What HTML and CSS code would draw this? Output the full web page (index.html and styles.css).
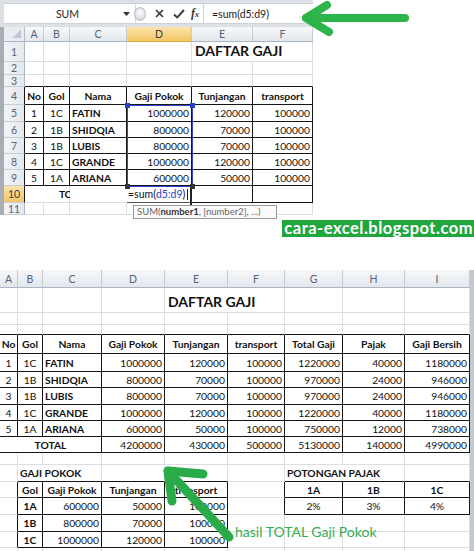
FILE: index.html
```html
<!DOCTYPE html>
<html>
<head>
<meta charset="utf-8">
<link rel="stylesheet" href="styles.css">
</head>
<body>
<div class="sheet1">
  <div class="fbar">
    <div class="namebox"><span class="nbtxt">SUM</span><svg class="dd" width="7" height="4" viewBox="0 0 7 4"><path d="M0 0h7L3.5 4z" fill="#333"/></svg></div>
    <div class="fbtns">
      <span class="circ"></span>
      <svg class="ix" width="9" height="9" viewBox="0 0 9 9"><path d="M1 1l7 7M8 1L1 8" stroke="#3a3a3a" stroke-width="1.7" fill="none"/></svg>
      <svg class="iv" width="12" height="10" viewBox="0 0 12 10"><path d="M1 5.5l3.2 3L11 1" stroke="#3a3a3a" stroke-width="1.9" fill="none"/></svg>
      <span class="fx">f<span class="fxs">x</span></span>
    </div>
    <div class="finput">=sum(d5:d9)</div>
  </div>
  <div class="g1">
    <div class="corner"></div><div class="ch">A</div><div class="ch">B</div><div class="ch">C</div><div class="ch sel">D</div><div class="ch">E</div><div class="ch">F</div>

    <div class="rh">1</div><div class="c"></div><div class="c"></div><div class="c"></div><div class="c"></div><div class="c sp2 t">DAFTAR GAJI</div>
    <div class="rh">2</div><div class="c"></div><div class="c"></div><div class="c"></div><div class="c"></div><div class="c"></div><div class="c"></div>
    <div class="rh">3</div><div class="c kb"></div><div class="c kb"></div><div class="c kb"></div><div class="c kb"></div><div class="c kb"></div><div class="c kb"></div>
    <div class="rh kr">4</div><div class="c k m b">No</div><div class="c k m b">Gol</div><div class="c k m b">Nama</div><div class="c k m b">Gaji Pokok</div><div class="c k m b">Tunjangan</div><div class="c k m b">transport</div>
    <div class="rh kr">5</div><div class="c k m">1</div><div class="c k m">1C</div><div class="c k b">FATIN</div><div class="c k r">1000000</div><div class="c k r">120000</div><div class="c k r">100000</div>
    <div class="rh kr">6</div><div class="c k m">2</div><div class="c k m">1B</div><div class="c k b">SHIDQIA</div><div class="c k r">800000</div><div class="c k r">70000</div><div class="c k r">100000</div>
    <div class="rh kr">7</div><div class="c k m">3</div><div class="c k m">1B</div><div class="c k b">LUBIS</div><div class="c k r">800000</div><div class="c k r">70000</div><div class="c k r">100000</div>
    <div class="rh kr">8</div><div class="c k m">4</div><div class="c k m">1C</div><div class="c k b">GRANDE</div><div class="c k r">1000000</div><div class="c k r">120000</div><div class="c k r">100000</div>
    <div class="rh kr">9</div><div class="c k m">5</div><div class="c k m">1A</div><div class="c k b">ARIANA</div><div class="c k r">600000</div><div class="c k r">50000</div><div class="c k r">100000</div>
    <div class="rh sel kr">10</div><div class="c sp2 tot b">TC</div><div class="c blank"></div><div class="c edit">=sum(<span class="ref">d5:d9</span>)<span class="caret"></span></div><div class="c k"></div><div class="c k"></div>
    <div class="rh">11</div><div class="c"></div><div class="c"></div><div class="c"></div><div class="c edit2"></div><div class="c"></div><div class="c"></div>
  </div>
  <div class="selbox"><i class="hd h1"></i><i class="hd h2"></i><i class="hd h3"></i><i class="hd h4"></i></div>
  <div class="tip">SUM(<b>number1</b>, [number2], ...)</div>
</div>

<div class="brand"><span>cara-excel.blogspot.com</span></div>

<div class="sheet2">
  <div class="g2">
    <div class="ch">A</div><div class="ch">B</div><div class="ch">C</div><div class="ch">D</div><div class="ch">E</div><div class="ch">F</div><div class="ch">G</div><div class="ch">H</div><div class="ch">I</div>

    <div class="c"></div><div class="c"></div><div class="c"></div><div class="c"></div><div class="c sp2 t">DAFTAR GAJI</div><div class="c"></div><div class="c"></div><div class="c"></div>
    <div class="c"></div><div class="c"></div><div class="c"></div><div class="c"></div><div class="c"></div><div class="c"></div><div class="c"></div><div class="c"></div><div class="c"></div>
    <div class="c kb"></div><div class="c kb"></div><div class="c kb"></div><div class="c kb"></div><div class="c kb"></div><div class="c kb"></div><div class="c kb"></div><div class="c kb"></div><div class="c kb"></div>

    <div class="c k m b">No</div><div class="c k m b">Gol</div><div class="c k m b">Nama</div><div class="c k m b">Gaji Pokok</div><div class="c k m b">Tunjangan</div><div class="c k m b">transport</div><div class="c k m b">Total Gaji</div><div class="c k m b">Pajak</div><div class="c k m b">Gaji Bersih</div>
    <div class="c k m">1</div><div class="c k m">1C</div><div class="c k b">FATIN</div><div class="c k r">1000000</div><div class="c k r">120000</div><div class="c k r">100000</div><div class="c k r">1220000</div><div class="c k r">40000</div><div class="c k r">1180000</div>
    <div class="c k m">2</div><div class="c k m">1B</div><div class="c k b">SHIDQIA</div><div class="c k r">800000</div><div class="c k r">70000</div><div class="c k r">100000</div><div class="c k r">970000</div><div class="c k r">24000</div><div class="c k r">946000</div>
    <div class="c k m">3</div><div class="c k m">1B</div><div class="c k b">LUBIS</div><div class="c k r">800000</div><div class="c k r">70000</div><div class="c k r">100000</div><div class="c k r">970000</div><div class="c k r">24000</div><div class="c k r">946000</div>
    <div class="c k m">4</div><div class="c k m">1C</div><div class="c k b">GRANDE</div><div class="c k r">1000000</div><div class="c k r">120000</div><div class="c k r">100000</div><div class="c k r">1220000</div><div class="c k r">40000</div><div class="c k r">1180000</div>
    <div class="c k m">5</div><div class="c k m">1A</div><div class="c k b">ARIANA</div><div class="c k r">600000</div><div class="c k r">50000</div><div class="c k r">100000</div><div class="c k r">750000</div><div class="c k r">12000</div><div class="c k r">738000</div>
    <div class="c k m b sp3">TOTAL</div><div class="c k r">4200000</div><div class="c k r">430000</div><div class="c k r">500000</div><div class="c k r">5130000</div><div class="c k r">140000</div><div class="c k r">4990000</div>

    <div class="c"></div><div class="c"></div><div class="c"></div><div class="c"></div><div class="c"></div><div class="c"></div><div class="c"></div><div class="c"></div><div class="c"></div>
    <div class="c"></div><div class="c kb sp2 b">GAJI POKOK</div><div class="c kb"></div><div class="c kb"></div><div class="c"></div><div class="c kb sp2 b">POTONGAN PAJAK</div><div class="c kb"></div>
    <div class="c kr"></div><div class="c k m b">Gol</div><div class="c k m b">Gaji Pokok</div><div class="c k m b">Tunjangan</div><div class="c k m b">transport</div><div class="c kr"></div><div class="c k m b">1A</div><div class="c k m b">1B</div><div class="c k m b">1C</div>
    <div class="c kr"></div><div class="c k m b">1A</div><div class="c k r">600000</div><div class="c k r">50000</div><div class="c k r">100000</div><div class="c kr"></div><div class="c k m">2%</div><div class="c k m">3%</div><div class="c k m">4%</div>
    <div class="c kr"></div><div class="c k m b">1B</div><div class="c k r">800000</div><div class="c k r">70000</div><div class="c k r">100000</div><div class="c"></div><div class="c"></div><div class="c"></div><div class="c"></div>
    <div class="c kr"></div><div class="c k m b">1C</div><div class="c k r">1000000</div><div class="c k r">120000</div><div class="c k r">100000</div><div class="c"></div><div class="c"></div><div class="c"></div><div class="c"></div>
    <div class="c"></div><div class="c"></div><div class="c"></div><div class="c"></div><div class="c"></div><div class="c"></div><div class="c"></div><div class="c"></div><div class="c"></div>
  </div>
</div>

<svg class="ov" width="474" height="551" viewBox="0 0 474 551">
  <g stroke="#2db54b" stroke-width="8" stroke-linecap="round" stroke-linejoin="round" fill="none">
    <path d="M306 18H405"/>
    <path d="M327 5L306 18L329 32"/>
  </g>
  <g stroke="#2aab49" stroke-width="9" stroke-linecap="round" stroke-linejoin="round" fill="none">
    <path d="M168 471L229 537"/>
    <path d="M203 474L168 471L172 501"/>
  </g>
</svg>
<div class="note">hasil TOTAL Gaji Pokok</div>
</body>
</html>
```

FILE: styles.css
```css
* { box-sizing: border-box; margin: 0; padding: 0; }
html, body { width: 474px; height: 551px; overflow: hidden; background: #fff; }
body {
  font-family: Lato, "Liberation Sans", sans-serif;
  font-size: 10.3px;
  color: #111;
  position: relative;
}

/* ---------- top sheet ---------- */
.sheet1 {
  width: 313px;
  height: 215px;
  background: #dde1e6;
  padding-top: 3px;
  position: relative;
}
.fbar {
  display: flex;
  height: 21px;
  margin-left: 4px;
  margin-bottom: 3px;
  background: #fff;
  border-top: 1px solid #cdd2d8;
  border-bottom: 1px solid #cdd2d8;
}
.namebox {
  width: 132px;
  display: flex;
  align-items: center;
  border-right: 1px solid #d5d9de;
  padding-right: 5px;
}
.nbtxt { flex: 1; text-align: center; font-size: 10.5px; color: #222; padding-left: 8px; }
.dd { display: block; }
.fbtns {
  width: 67px;
  display: flex;
  align-items: center;
}
.circ {
  width: 12px;
  height: 14px;
  border-radius: 50%;
  background: radial-gradient(circle at 50% 40%, #ffffff, #d8dce1 70%);
  border: 1px solid #b9bfc6;
  margin-left: -2px;
}
.ix { margin-left: 9px; }
.iv { margin-left: 9px; }
.fx {
  margin-left: 6px;
  font-family: "Liberation Serif", serif;
  font-style: italic;
  font-size: 12px;
  color: #3a3a3a;
  font-weight: 700;
}
.fxs { font-size: 8px; }
.finput {
  flex: 1;
  border-left: 1px solid #cdd2d8;
  padding-left: 8px;
  display: flex;
  align-items: center;
  font-size: 10.5px;
  color: #222;
}

.g1 {
  display: grid;
  grid-template-columns: 21px 19px 26px 57px 65px 61px 60px;
  grid-template-rows: 15px 20px 13px 12px 18px 17px 16px 16px 16px 16px 17px 12px;
  border-left: 4px solid #a7aeb6;
  width: 313px;
}

.c {
  background: #fff;
  border-right: 1px solid #dcdee1;
  border-bottom: 1px solid #dcdee1;
  display: flex;
  align-items: center;
  padding: 0 2px;
  white-space: nowrap;
  overflow: hidden;
}
.r { justify-content: flex-end; }
.m { justify-content: center; }
.b { font-weight: 700; }
.kr { border-right-color: #151515; }
.kb { border-bottom-color: #151515; }
.k { border-right-color: #151515; border-bottom-color: #151515; }
.sp2 { grid-column: span 2; }
.sp3 { grid-column: span 3; }
.t {
  font-size: 14px;
  font-weight: 700;
  padding-left: 3px;
  align-items: flex-end;
  padding-bottom: 2px;
  overflow: visible;
}

.corner {
  background:
    linear-gradient(135deg, transparent 50%, #c1c7cf 50%) right 3px bottom 3px / 8px 8px no-repeat,
    #e8ebef;
  border-right: 1px solid #b3bdc9;
  border-bottom: 1px solid #a9b6c5;
}
.ch {
  background: linear-gradient(#f7f8fa, #e3e7ec);
  border-right: 1px solid #c6ccd3;
  border-bottom: 1px solid #aab6c4;
  color: #56637a;
  display: flex;
  align-items: center;
  justify-content: center;
  font-size: 10.5px;
}
.ch.sel, .rh.sel {
  background: linear-gradient(#fbe5ab, #f3c564);
  color: #3b3b3b;
}
.ch.sel { border-bottom-color: #e0a83c; }
.rh {
  background: linear-gradient(90deg, #f2f4f6, #e5e8ec);
  border-right: 1px solid #aab6c4;
  border-bottom: 1px solid #c9ced5;
  color: #56637a;
  display: flex;
  align-items: center;
  justify-content: center;
  font-size: 10.5px;
}
.rh.kr { border-right-color: #151515; }

.tot { padding: 0 0 0 34px; letter-spacing: -0.4px; overflow: visible; }
.blank { border-right-color: #fff; }
.edit {
  padding-left: 1px;
  border-right: 2px solid #222;
  border-bottom-color: #555;
  font-size: 10.5px;
  overflow: visible;
}
.ref { color: #2b3fcc; }
.caret { display: inline-block; width: 1px; height: 11px; background: #222; margin-left: 2px; }
.edit2 { border-right: 2px solid #222; }

.selbox {
  position: absolute;
  left: 127px;
  top: 105px;
  width: 66px;
  height: 82px;
  border: 1px solid #3446d0;
}
.hd { position: absolute; width: 5px; height: 5px; background: #2c3fcc; }
.h1 { left: -3px; top: -3px; }
.h2 { right: -3px; top: -3px; }
.h3 { left: -3px; bottom: -3px; background: #333; }
.h4 { right: -3px; bottom: -3px; background: #333; }

.tip {
  position: absolute;
  left: 133px;
  top: 205px;
  width: 144px;
  height: 14px;
  background: #fbfbfb;
  border: 1px solid #9a9a9a;
  font-size: 9.5px;
  color: #666;
  padding-left: 3px;
  line-height: 12px;
  white-space: nowrap;
  overflow: hidden;
}
.tip b { color: #333; }

/* ---------- brand label ---------- */
.brand {
  display: flex;
  justify-content: flex-end;
  margin-top: 5px;
}
.brand span {
  background: #1fa63c;
  color: #fff;
  font-weight: 700;
  font-size: 16.5px;
  letter-spacing: 0.5px;
  height: 17px;
  line-height: 17px;
  padding: 0 1px 0 2px;
  white-space: nowrap;
}

/* ---------- bottom sheet ---------- */
.sheet2 {
  margin-top: 33px;
  width: 474px;
  background: #c4c9cf;
}
.g2 {
  display: grid;
  width: 470px;
  grid-template-columns: 18px 25px 59px 63px 63px 57px 58px 62px 65px;
  grid-template-rows: 18px 25px 12px 10px 19px 18px 16px 17px 16px 16px 16px 12px 17px 16px 17px 17px 16px 12px;
}

/* ---------- annotations ---------- */
.ov {
  position: absolute;
  left: 0;
  top: 0;
  pointer-events: none;
}
.note {
  position: absolute;
  left: 235px;
  top: 523px;
  font-size: 14px;
  line-height: 17px;
  color: #33ad53;
  white-space: nowrap;
}
```
